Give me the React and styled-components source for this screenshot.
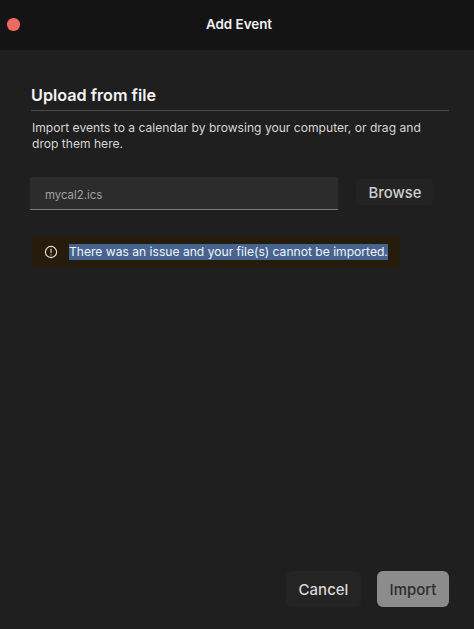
import React from "react";
import styled, { createGlobalStyle } from "styled-components";

const Global = createGlobalStyle`
  html, body { margin: 0; padding: 0; background: #1f1f1f; }
  * { box-sizing: border-box; }
`;

const Dialog = styled.div`
  width: 474px;
  height: 629px;
  display: flex;
  flex-direction: column;
  background: #1f1f1f;
  font-family: Inter, "Liberation Sans", sans-serif;
  overflow: hidden;
`;

const TitleBar = styled.header`
  position: relative;
  flex: none;
  height: 50px;
  display: flex;
  align-items: center;
  justify-content: center;
  background: #141414;
`;

const CloseDot = styled.span`
  position: absolute;
  left: 7px;
  top: 18px;
  width: 12.5px;
  height: 12.5px;
  border-radius: 50%;
  background: #ee6a5f;
`;

const WindowTitle = styled.h1`
  margin: 0 0 3px 4px;
  font-size: 13.4px;
  font-weight: 600;
  color: #f0f0f0;
`;

const Body = styled.main`
  flex: 1;
  display: flex;
  flex-direction: column;
  padding: 34px 25px 22px 31px;
`;

const SectionTitle = styled.h2`
  margin: 0;
  padding-bottom: 4px;
  font-size: 16.2px;
  line-height: 22px;
  font-weight: 600;
  color: #f4f4f4;
  border-bottom: 1px solid #4a4a4a;
`;

const Description = styled.p`
  margin: 9px 0 0 1px;
  font-size: 12.1px;
  line-height: 16px;
  color: #d6d6d6;
`;

const FileRow = styled.div`
  display: flex;
  align-items: center;
  gap: 18px;
  margin: 25px 0 0 -1px;
`;

const FileField = styled.div`
  width: 308px;
  height: 33px;
  display: flex;
  align-items: center;
  padding: 4px 0 0 15px;
  font-size: 11.4px;
  color: #a0a0a0;
  background: #2c2c2c;
  border-bottom: 1px solid #7a7a7a;
`;

const BrowseButton = styled.button`
  width: 77px;
  height: 26px;
  margin-top: -3px;
  padding: 2px 0 0 1px;
  border: 0;
  border-radius: 3px;
  background: #232323;
  font: 500 14.8px Inter, "Liberation Sans", sans-serif;
  color: #cfcfcf;
`;

const Alert = styled.div`
  align-self: flex-start;
  display: flex;
  align-items: center;
  gap: 11px;
  height: 32px;
  margin-top: 26px;
  margin-left: 1px;
  padding: 0 12px;
  background: #261c0d;
`;

const AlertIcon = styled.svg`
  flex: none;
  width: 14px;
  height: 14px;
  fill: none;
  stroke: #efe4cf;
  stroke-width: 1.1;
  stroke-linecap: round;
`;

const SelectedText = styled.span`
  font-size: 12.1px;
  line-height: 16px;
  white-space: nowrap;
  color: #f0f4fa;
  background: #47648f;
`;

const Footer = styled.footer`
  margin-top: auto;
  display: flex;
  justify-content: flex-end;
  gap: 16px;
`;

const FooterButton = styled.button`
  width: ${(p) => p.$width}px;
  height: 36px;
  padding: 0;
  border: 0;
  border-radius: 6px;
  font: 500 15px Inter, "Liberation Sans", sans-serif;
  color: ${(p) => (p.$primary ? "#2c2c2c" : "#d8d8d8")};
  background: ${(p) => (p.$primary ? "#8c8c8c" : "#242424")};
`;

export default function App() {
  return (
    <>
      <Global />
      <Dialog>
        <TitleBar>
          <CloseDot />
          <WindowTitle>Add Event</WindowTitle>
        </TitleBar>
        <Body>
          <SectionTitle>Upload from file</SectionTitle>
          <Description>
            Import events to a calendar by browsing your computer, or drag and drop them here.
          </Description>
          <FileRow>
            <FileField>mycal2.ics</FileField>
            <BrowseButton>Browse</BrowseButton>
          </FileRow>
          <Alert>
            <AlertIcon viewBox="0 0 14 14">
              <circle cx="7" cy="7" r="5.6" />
              <path d="M7 4v3.6M7 9.8v.1" />
            </AlertIcon>
            <SelectedText>There was an issue and your file(s) cannot be imported.</SelectedText>
          </Alert>
          <Footer>
            <FooterButton $width={75}>Cancel</FooterButton>
            <FooterButton $width={72} $primary>Import</FooterButton>
          </Footer>
        </Body>
      </Dialog>
    </>
  );
}
